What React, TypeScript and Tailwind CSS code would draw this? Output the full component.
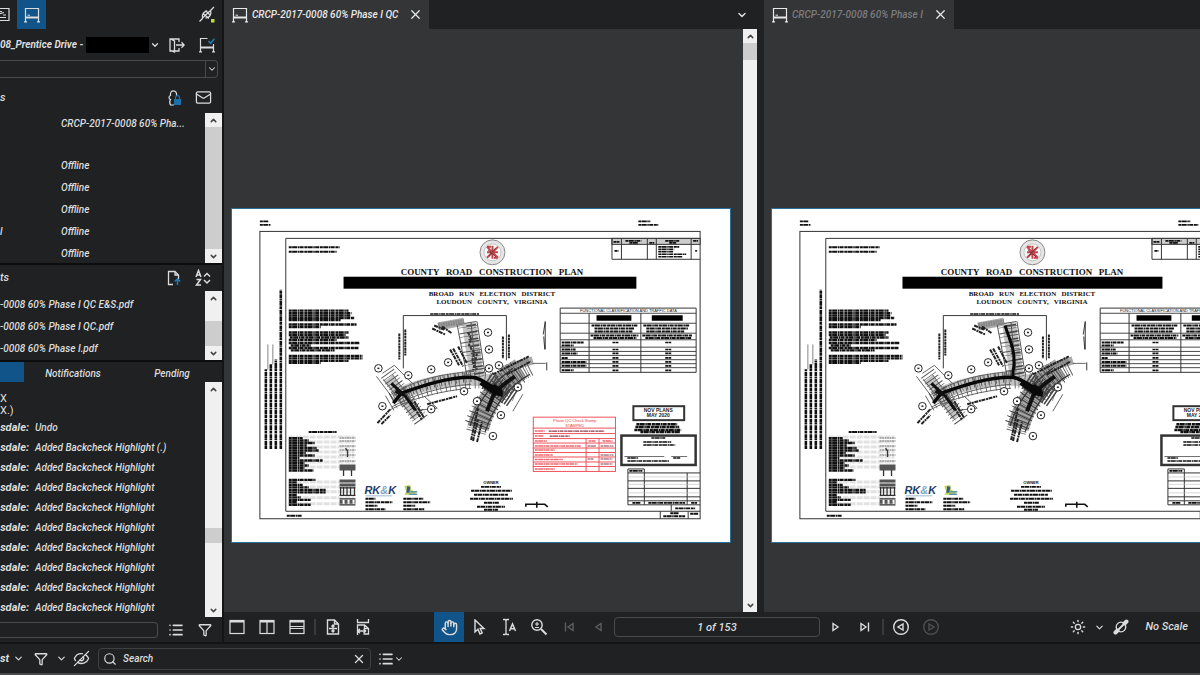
import React from "react";
import {
  ChevronDown,
  ChevronUp,
  EyeOff,
  Funnel,
  Hand,
  List,
  Mail,
  Search,
  Sun,
  X,
} from "lucide-react";

type IconProps = { className?: string };

const SheetIcon = ({ className }: IconProps) => (
  <svg className={className} width="16" height="16" viewBox="0 0 16 16" fill="none" stroke="currentColor">
    <path d="M1.5 15V1.5h13V15M0 14.8h3M13 14.8h3" strokeWidth="1.2" />
    <path d="M1.5 10.5h13" strokeWidth="2" />
    <path d="M3.5 8.2h2.5" strokeWidth="1" />
  </svg>
);

const MarkupIcon = () => (
  <svg width="16" height="16" viewBox="0 0 16 16" fill="none" stroke="currentColor" strokeWidth="1.2">
    <path d="M0 1.5h15v12H0M3 4.5h5M3 7.5l7-2M4 10.5h8M9 8h3" />
  </svg>
);

const PlugIcon = () => (
  <svg width="18" height="18" viewBox="0 0 18 18" fill="none" stroke="currentColor" strokeWidth="1.3">
    <path d="M1.5 15.5l3.500-3.500M12.500 4.500l3.500-3.500M5 11.500l7.500-7" />
    <path d="M4.500 12C3.500 8.500 6 5 9.500 5.500M12.500 4.500c1.500 3.500-1 7.500-5 7.500M5 7.500l6 5M7.500 4.500l5 5" />
    <rect x="13" y="13" width="3.500" height="3.500" fill="#c8d83c" stroke="none" />
  </svg>
);

const ExitIcon = () => (
  <svg width="16" height="16" viewBox="0 0 16 16" fill="none" stroke="currentColor" strokeWidth="1.300">
    <path d="M10 5V2H1v12h9v-3M1.500 2l4 2v11l-4-1.500M7 8h8M12.500 5.300L15.200 8l-2.700 2.700" />
  </svg>
);

const SheetCheckIcon = () => (
  <svg width="16" height="16" viewBox="0 0 16 16" fill="none" stroke="currentColor">
    <path d="M8.500 1.500h-7V15M14.500 7v8M0 14.800h3M13 14.800h3" strokeWidth="1.200" />
    <path d="M1.500 10.500h13" strokeWidth="2" />
    <path d="M9.500 4l2 2.200 4-4.500" stroke="#1b7fb8" strokeWidth="1.600" />
  </svg>
);

const PersonLockIcon = () => (
  <svg width="16" height="16" viewBox="0 0 16 16" fill="none" stroke="currentColor" strokeWidth="1.200">
    <path d="M7 15H3.500c-1-2-1-4 0-5.500C1.500 9 1.500 6 3.500 5.500 3 2.500 4.500.8 6.500.8s3.500 2 3 5" />
    <path d="M8.500 9V7.500c0-2.500 4-2.500 4 0V9" stroke="#1f6fa8" />
    <rect x="7" y="9" width="7" height="6" fill="#1f6fa8" stroke="none" />
  </svg>
);

const AddFileIcon = () => (
  <svg width="16" height="16" viewBox="0 0 16 16" fill="none" stroke="currentColor" strokeWidth="1.300">
    <path d="M7 14.500H2.500v-13H9l3.500 3.500v4M9 1.500V5h3.500" />
    <path d="M11.500 15V9M8.800 11.500l2.700-2.700 2.700 2.700" stroke="#1f7fbf" strokeWidth="1.500" />
  </svg>
);

const SortIcon = () => (
  <svg width="18" height="18" viewBox="0 0 18 18" fill="none" stroke="currentColor" strokeWidth="1.500">
    <path d="M2 8l2.500-6.500L7 8M2.800 6h3.500M2.500 10.500h4L2.500 16H7" />
    <path d="M10 7.500l3-3 3 3M10 11l3 3 3-3" />
  </svg>
);

const EnvelopeIcon = () => <Mail size={17} strokeWidth={1.8} />;

const LayoutIcon = ({ kind }: { kind: "single" | "columns" | "rows" }) => (
  <svg width="16" height="16" viewBox="0 0 16 16" fill="none" stroke="currentColor" strokeWidth="1.200">
    <rect x="1" y="1.500" width="14" height="13" />
    <path d="M1 2.500h14" strokeWidth="2" />
    {kind === "columns" && <path d="M8 2v12.500" />}
    {kind === "rows" && <path d="M1 7.500h14M1 9.500h14" />}
  </svg>
);

const FitPageIcon = () => (
  <svg width="16" height="16" viewBox="0 0 16 16" fill="none" stroke="currentColor" strokeWidth="1.400">
    <path d="M2.500 1h7l4 4v10h-11zM9.500 1v4h4" />
    <path d="M8 5.500v8M4 9.500h8M6.500 7.500L8 6l1.500 1.500M6.500 11.500L8 13l1.500-1.500" />
  </svg>
);

const FitWidthIcon = () => (
  <svg width="16" height="16" viewBox="0 0 16 16" fill="none" stroke="currentColor" strokeWidth="1.300">
    <path d="M2.500 0v3.500h11V0M2.500 16V6h7l4 3.500V15h-5M2.500 12h8M5 9.800L2.800 12 5 14.200M8.500 9.800l2.200 2.200-2.200 2.200M9.500 6v3.500h4" />
  </svg>
);

const PointerIcon = () => (
  <svg width="16" height="16" viewBox="0 0 16 16" fill="none" stroke="currentColor" strokeWidth="1.400">
    <path d="M4 1v12l3-2.800L9 15l2.200-1-2-4.500H13z" />
  </svg>
);

const TextSelectIcon = () => (
  <svg width="16" height="18" viewBox="0 0 16 18" fill="none" stroke="currentColor" strokeWidth="1.300">
    <path d="M2 1.500h2l1 1 1-1h2M5 2v14M2 16.500h2l1-1 1 1h2" />
    <path d="M8.500 13L11.500 6l3 7M9.500 10.800h4" strokeWidth="1.500" />
  </svg>
);

const ZoomIcon = () => (
  <svg width="18" height="18" viewBox="0 0 18 18" fill="none" stroke="currentColor">
    <circle cx="7" cy="7" r="5.200" strokeWidth="1.400" />
    <path d="M11 11l5.500 5.500" strokeWidth="2" />
    <path d="M7 4v4M5 6h4M5 9.500h4" strokeWidth="1.100" />
  </svg>
);

const StepIcon = ({ flip, bar }: { flip?: boolean; bar?: boolean }) => (
  <svg className={flip ? "-scale-x-100" : ""} width="12" height="12" viewBox="0 0 12 12" fill="none" stroke="currentColor" strokeWidth="1.400">
    <path d={bar ? "M2 2.500v7L7 6zM9.500 1.500v9" : "M4 2.500v7L9 6z"} />
  </svg>
);

const CircleStepIcon = ({ flip }: { flip?: boolean }) => (
  <svg className={flip ? "-scale-x-100" : ""} width="18" height="18" viewBox="0 0 18 18" fill="none" stroke="currentColor" strokeWidth="1.400">
    <circle cx="9" cy="9" r="7.300" />
    <path d="M7 6v6l5-3z" />
  </svg>
);

const LineWeightIcon = () => (
  <svg width="16" height="16" viewBox="0 0 16 16" fill="none" stroke="currentColor">
    <circle cx="8" cy="8" r="4.800" strokeWidth="1.300" />
    <path d="M2 14L14 2" strokeWidth="1.800" />
    <path d="M2.500 13.500l2-2M11.500 4.500l2-2" strokeWidth="4" strokeLinecap="round" />
  </svg>
);

const IconButton = ({
  label,
  className = "",
  children,
}: {
  label: string;
  className?: string;
  children: React.ReactNode;
}) => (
  <button type="button" aria-label={label} className={`flex shrink-0 items-center justify-center ${className}`}>
    {children}
  </button>
);

const ScrollBar = ({ width, before, thumb }: { width: string; before: number; thumb: number }) => (
  <div className={`flex shrink-0 flex-col bg-[#f0f0f0] text-[#444] ${width}`}>
    <div className="flex h-[14px] items-center justify-center">
      <ChevronUp size={9} strokeWidth={4} />
    </div>
    <div className="min-h-0 flex-1">
      <div style={{ height: `${before}%` }} />
      <div className="bg-[#cdcdcd]" style={{ height: `${thumb}%` }} />
    </div>
    <div className="flex h-[14px] items-center justify-center">
      <ChevronDown size={9} strokeWidth={4} />
    </div>
  </div>
);

// [x, y, width] of each line of fine print on the sheet
type Row = [number, number, number];

const FinePrint = ({ rows, weight = 2.1, color = "#111" }: { rows: Row[]; weight?: number; color?: string }) => (
  <g stroke={color} strokeWidth={weight} strokeDasharray="3 .4 5 .6 1.500 .4 4 .7">
    {rows.map(([x, y, w], i) => (
      <path key={i} d={`M${x} ${y}h${w}`} />
    ))}
  </g>
);

const notes: Row[] = [
  [57, 102, 60], [57, 104.5, 63], [57, 107, 62], [57, 109.5, 66], [57, 111.5, 52],
  [57, 116, 68], [57, 118.500, 32],
  [57, 124, 60], [57, 126.500, 57], [58, 129, 59], [57, 131.500, 48], [57, 134.500, 71], [59, 137, 20],
  [57, 139.500, 70], [59, 142, 44],
  [57, 147.500, 74], [57, 150, 74], [57, 152.500, 60], [57, 154.500, 32],
];

const legendRows = [230, 232.5, 235, 237.500, 240, 242.500, 245, 247.500, 250, 252.500, 255, 257.500, 260, 262.500];
const legendWidths = [14, 20, 26, 18, 28, 30, 17, 26, 11, 34, 16, 20, 16, 25];
const utilityRows = [272, 274.500, 277, 279.500, 282, 284.500, 287, 289.500, 292, 294.500, 297];
const utilityWidths = [27, 8, 14, 20, 37, 37, 8, 12, 22, 8, 22];
const trafficRows = [104.7, 114.700, 124.700, 131.300, 138.700, 143, 147, 151.300, 155.300, 159.300];

const bubbles: [number, number][] = [
  [147, 160], [200, 161], [217, 154], [257, 124], [258, 141], [258, 160], [268, 157],
  [151, 198], [177, 167], [200, 201], [233, 183], [246, 193], [287, 179], [270, 207], [262, 228],
];

const ReviewStamp = () => (
  <g stroke="#f0525a" fill="none" strokeWidth="1">
    <rect x="302.500" y="209" width="82.500" height="54.500" fill="#fff" />
    <path d="M302 220h83M302 225.500h83M302 230.500h83M302 235h83M302 240h83M302 244.500h83M302 249h83M302 254h83M302 258.500h83M355.500 230.500v33M368.500 230.500v33" />
    <g stroke="none" fill="#e8404a" fontSize="4" textAnchor="middle" className="font-['Liberation_Sans']">
      <text x="344" y="214">Phase QC Check Stamp</text>
      <text x="344" y="218.500">STAMPED</text>
    </g>
    <FinePrint color="#8b3b48" weight={1.2} rows={[[318, 223, 56], [319, 228, 20]]} />
    <FinePrint color="#ee6870" weight={1.5} rows={[[304, 223, 10], [304, 228, 9], [304, 233, 12], [304, 238, 46], [304, 242, 20], [304, 247, 18], [304, 251.500, 28], [304, 256, 43], [304, 261, 20], [358, 233, 7], [372, 233, 10]]} />
    <FinePrint color="#aa8088" weight={1.500} rows={[[357, 238, 9], [370, 238, 13], [357, 251, 6], [370, 247, 13], [370, 251, 12], [370, 256, 12]]} />
  </g>
);

const RoadMap = ({ built }: { built: boolean }) => (
  <g fill="none" stroke="#222">
    <path d="M172 160v-53h103.500v45" strokeWidth=".9" />
    <FinePrint weight={1.600} rows={[[199, 105.500, 49]]} />
    <path d="M168 125v26M174 121v26M272 128v22M278 126v24" strokeWidth="2" strokeDasharray="3 .6 2 .5" />

    {/* shaded survey ground */}
    <g stroke="#c4c4c4">
      <path d="M162 189C185 177 212 171 240 171s26 8 34 12" strokeWidth="13" />
      <path d="M157 170l29 38" strokeWidth="11" />
      <path d="M238 115l8 55" strokeWidth="14" />
      <path d="M290 160c-24 16-36 34-43 60" strokeWidth="22" stroke="#a8a8a8" />
      <path d="M207 118l26-5M276 160l26-8" strokeWidth="8" stroke="#aaa" />
    </g>

    {/* parcels either side of the roads */}
    <g stroke="#555">
      <path d="M158 195C180 182 212 174 240 172s30 8 48 14" strokeWidth="17" strokeDasharray=".8 3.500 .6 5" />
      <path d="M160 190C182 178 212 170 242 168" strokeWidth="11" strokeDasharray="1 2 .5 4" />
      <path d="M158 202C180 190 212 182 240 180M160 186C185 171 212 165 243 163M160 199C182 186 212 178 240 176" strokeWidth=".9" />
      <path d="M156 165l34 47" strokeWidth="16" strokeDasharray="1 2.500 .6 3" />
      <path d="M161 166l30 41M152 171l32 41" strokeWidth=".9" />
      <path d="M236 114l9 54" strokeWidth="19" strokeDasharray="1 3 .5 5" />
      <path d="M240 116l9 54" strokeWidth="10" strokeDasharray="1.500 2 .5 3" stroke="#444" />
      <path d="M226 116l10 52M246 113l8 52M240 114l5 50" strokeWidth="1" />
      <path d="M298 158c-28 14-44 34-53 66" strokeWidth="20" strokeDasharray="1 2 .6 1.500" stroke="#666" />
      <path d="M287 164c-19 14-34 30-42 56" strokeWidth="25" strokeDasharray=".8 4" stroke="#333" />
      <path d="M282 160c-20 14-36 34-43 58M299 166c-24 14-36 32-45 58" strokeWidth="1.200" stroke="#333" />
      <path d="M256 172l26 18" strokeWidth="20" strokeDasharray="1.500 1.500" stroke="#444" />
      <path d="M207 117l26-4M272 160l26-9" strokeWidth="5" strokeDasharray="2 .5" stroke="#888" />
    </g>
    <path d="M201 120l13 6M203 117l10 4M211 118l10 7M222 140l10 18M227 138l9 17M219 141l9 16M262 166l36-18M276 166l24-13M240 232l7-32M246 234l5-20M242 233l5-22M146 215l13-14M150 216l9-9M179 193l12 19M183 193l10 17M196 196l30-8" strokeWidth="2" strokeDasharray="4 .8 2 .6" />
    <path d="M151 165l12-8 18 18M193 188l13 12-18 2M302 155h13M262 227l-4 1M145 168l18 24M282 203l10-17" strokeWidth=".7" />

    {/* carriageways */}
    <path d="M162 195l8-10C190 178 215 169 240 169c12 0 18 10 30 14" stroke="#080808" strokeWidth="3.500" />
    <path d="M160 175l14 13 10 14M164 183l11 5" stroke="#111" strokeWidth="3" />
    <path d="M284 168c-8 6-17 11-22 20l-6 15" stroke="#111" strokeWidth="4" />
    <path d="M250 174l14 10 8 2M262 178l8 6" stroke="#0a0a0a" strokeWidth="5.500" />
    {built && <path d="M234 117c4 13 10 24 9 38 0 5-2 9-1 14" stroke="#080808" strokeWidth="3" />}
    {!built && <path d="M237 124l3 6-2 7 5 7-2 9 5 8M246 145l-4 17" stroke="#333" strokeWidth="2" strokeDasharray="3 1" />}

    <g fill="#fff" stroke="#222" strokeWidth="1">
      {bubbles.map(([x, y]) => (
        <circle key={`${x}-${y}`} cx={x} cy={y} r="3.800" />
      ))}
    </g>
    <g strokeWidth="1.500">
      {bubbles.map(([x, y]) => (
        <path key={`${x}-${y}`} d={`M${x - 1} ${y}h2`} />
      ))}
    </g>
    <path d="M314.500 113v28M312.500 126l2-13M313 128l1 13M316 154v8" strokeWidth=".9" />
  </g>
);

const PlanSheet = ({ barX, barWidth, stamped }: { barX: number; barWidth: number; stamped?: boolean }) => (
  <svg
    role="img"
    aria-label="County road construction plan"
    className="block w-[500px] shrink-0 border border-[#2a6f99] bg-white not-italic"
    viewBox="0 0 500 334"
    fill="none"
    stroke="#333"
  >
    <FinePrint weight={1.8} rows={[[28, 12.500, 9], [28, 16, 11], [408, 12.500, 12], [408, 16, 20]]} />
    <rect x="28" y="22.500" width="442" height="288.500" strokeWidth="1" />
    <path d="M470 29.500H54v274h416" strokeWidth="1" />
    <FinePrint rows={[[57, 38.500, 51], [57, 43, 48], [55, 308, 15]]} weight={2} />

    {/* seal */}
    <circle cx="261.500" cy="43.500" r="12.500" fill="#e6e6e6" stroke="#888" />
    <circle cx="261.500" cy="43.500" r="8.500" fill="#f6f6f6" stroke="#aaa" strokeWidth=".6" />
    <path d="M256 38l11 11M267 38l-11 11M261.500 37v13M256 43.500h11M256 38h4M263 49h4" stroke="#c4444c" strokeWidth="2" />
    <path d="M257 41l8 7M265 39l-7 8" stroke="#5b3a3e" strokeWidth=".8" />

    <g className="font-['Liberation_Serif'] font-bold" fill="#111" stroke="none" textAnchor="middle">
      <text x="261" y="66" fontSize="9" className="whitespace-pre">COUNTY   ROAD   CONSTRUCTION   PLAN</text>
      <text x="261" y="87" fontSize="7" className="whitespace-pre">BROAD   RUN   ELECTION   DISTRICT</text>
      <text x="261" y="95" fontSize="7" className="whitespace-pre">LOUDOUN   COUNTY,   VIRGINIA</text>
    </g>
    <rect x={barX} y="68" width={barWidth} height="12" fill="#000" stroke="none" />

    {/* sheet reference block */}
    <rect x="381.500" y="29.500" width="88.500" height="6" fill="#ccc" />
    <path d="M381.500 29.500v21H470M391 29.500v21M417 29.500v21M426 29.500v21M461 29.500v21" />
    <FinePrint weight={1.600} rows={[[383, 33, 6], [395, 32, 16], [399, 34, 9], [419, 34, 5], [435, 32, 14], [439, 34, 7], [463, 32, 5], [384, 42, 4], [428, 38, 21], [428, 40.500, 16], [428, 43, 15], [428, 45.500, 28], [428, 48, 24], [465, 42, 2]]} />

    <FinePrint rows={notes} weight={2.400} />
    <g transform="translate(34 241) rotate(-90)">
      <FinePrint weight={2.600} rows={[[0, 0, 80], [0, 5, 85], [0, 10, 90], [0, 15, 160]]} />
      <path d="M80 2h25M85 7h20" strokeWidth=".6" />
    </g>

    {/* traffic data table */}
    <path d="M329.500 99.500H466v64.500H329.500zM358.500 104.700V164M410.500 104.700V164" />
    {trafficRows.map((y) => (
      <path key={y} d={`M329.500 ${y}H466`} strokeWidth=".9" />
    ))}
    <text x="398" y="103.500" fontSize="4" fill="#222" stroke="none" textAnchor="middle" className="font-['Liberation_Sans']">
      FUNCTIONAL CLASSIFICATION AND TRAFFIC DATA
    </text>
    <path d="M366 109.500h35M421.500 109.500h31" stroke="#000" strokeWidth="5.500" />
    <FinePrint weight={2.100} rows={[[361, 117, 46], [364, 120, 40], [364, 123, 38], [413, 117, 46], [416, 120, 42], [416, 123, 38], [360, 127, 48], [363, 129.500, 43], [412, 127, 50], [415, 129.500, 46]]} />
    <FinePrint weight={2} rows={[[331, 134, 22], [331, 137, 12], [331, 141, 14], [331, 145, 16], [331, 149.500, 6], [331, 153.500, 25], [331, 157.500, 25], [331, 162, 12]]} />
    {[134, 141, 145, 149.500, 153.500, 157.500, 162].map((y) => (
      <FinePrint key={y} weight={1.600} rows={[[382, y, 6], [435, y, 6]]} />
    ))}

    <RoadMap built={!stamped} />

    {/* legend */}
    <FinePrint weight={2} rows={[[77, 224, 28]]} />
    <path d="M57 229h66M57 234h66M57 239h66M57 244h66M57 249h66M57 254h66M57 259h66M57 274h66M57 279h66M57 284h66M57 290h66M57 296h66" stroke="#e2e2e2" strokeWidth="3" strokeDasharray="6 1" />
    <FinePrint weight={2.400} rows={legendRows.map((y, i): Row => [57, y, legendWidths[i]])} />
    <FinePrint weight={2.400} rows={utilityRows.map((y, i): Row => [57, y, utilityWidths[i]])} />
    <path d="M108 230h16M108 233h16M108 238h16M108 242h16M108 247h16M108 253h16" stroke="#999" strokeWidth="1.500" strokeDasharray="2 .5" />
    <path d="M108 258h16M108 261h16M108 273h16M108 277h16" stroke="#555" strokeWidth="3" />
    <path d="M114 240l2 3v6M112 262v6M120 262v6" strokeWidth="1.300" />
    <path d="M108 280h16M108 287.500h16M109 279v9M112 279v9M115.500 279v9M119 279v9M123 279v9M108 291h16M108 297h16" strokeWidth="1.300" />
    <path d="M108 294h16" strokeWidth="4" strokeDasharray="3 2" stroke="#555" />

    {/* consultants */}
    <text x="133" y="286.500" fontSize="11" fill="#1d3c68" stroke="none" className="font-['Liberation_Sans'] font-bold italic">
      RK<tspan fill="#84a7c4">&amp;</tspan>K
    </text>
    <path d="M134 288h27" stroke="#9ab7cf" strokeWidth="1" />
    <path d="M173 278l6-1 1 5 5 3-3 2h-9l2-3z" fill="#c4d05a" stroke="none" />
    <path d="M176 278l3 1-1 6h-3z" fill="#2d5d96" stroke="none" />
    <path d="M179 284h7M178 286.500h8" stroke="#5e94a8" strokeWidth="1.500" />
    <FinePrint weight={2} rows={[[134, 291, 10], [134, 294.500, 27], [134, 298, 12], [134, 301.500, 20], [172, 291, 20], [172, 294.500, 27], [172, 298, 12], [172, 301.500, 21]]} />
    <text x="260" y="276" fontSize="4" fill="#111" stroke="none" textAnchor="middle" className="font-['Liberation_Sans'] font-bold">OWNER</text>
    <FinePrint weight={2} rows={[[250, 279, 20], [240, 283, 41], [243, 287, 34], [239, 291, 43], [253, 295, 15], [246, 299, 28], [253, 302, 14]]} />
    <path d="M295 299v-2.500h11V294v6M306 296.500h8l3 2.500" stroke="#111" strokeWidth="1.600" />

    {stamped && <ReviewStamp />}

    {/* title block */}
    <rect x="403" y="198" width="51" height="14" strokeWidth="2" />
    <g fontSize="5" fill="#222" stroke="none" textAnchor="middle" className="font-['Liberation_Sans'] font-bold">
      <text x="428" y="204">NOV PLANS</text>
      <text x="428" y="209">MAY 2020</text>
    </g>
    <FinePrint weight={2.500} rows={[[406, 216, 41], [405, 219, 44], [404, 222, 47], [410, 224, 40]]} />
    <rect x="391" y="227.500" width="74.500" height="29.500" strokeWidth="2.500" />
    <FinePrint weight={1.600} rows={[[421, 230, 14], [413, 234, 28], [413, 237, 32], [397, 250, 11], [443, 250, 7], [397, 253, 42]]} />
    <path d="M394 248.500h40M441 248.500h16" strokeWidth=".7" />
    <path d="M397.500 261H414v4h56M397.500 261v36H470M397.500 265H414M397.500 273H470M397.500 280.500H470M397.500 289H470M397.500 293H470M414 265v32M457 265v32M441 303v-6M430 303.500v7.500M458 303.500v7.500" strokeWidth="1" />
    <FinePrint weight={1.800} rows={[[399, 263, 13], [402, 295, 8], [418, 295, 37], [461, 295, 6], [445, 300.500, 20], [440, 305.500, 9], [433, 308.500, 22], [460, 306, 8]]} />
    <path d="M397.500 269H470M397.500 276.500H470M397.500 285H470" stroke="#bbb" strokeWidth=".6" />
  </svg>
);

const attendees = ["", "", "", "l", ""];
const documents = [
  "-0008 60% Phase I QC E&S.pdf",
  "-0008 60% Phase I QC.pdf",
  "-0008 60% Phase I.pdf",
];
const records = ["Undo", "Added Backcheck Highlight (.)", ...Array(8).fill("Added Backcheck Highlight")];

const SidePanel = () => (
  <aside className="flex w-[224px] shrink-0 flex-col border-r-2 border-[#141517]">
    <div className="flex h-[29px] items-center">
      <IconButton label="Markups" className="-ml-1.5 w-4">
        <MarkupIcon />
      </IconButton>
      <IconButton label="Studio" className="ml-[7px] h-full w-[29px] bg-[#10548a]">
        <SheetIcon />
      </IconButton>
      <IconButton label="Connection" className="mr-1.5 ml-auto">
        <PlugIcon />
      </IconButton>
    </div>

    <div className="flex h-[31px] items-center">
      <span className="w-[86px] shrink-0 font-bold whitespace-nowrap">08_Prentice Drive -</span>
      <span className="h-4 w-[63px] shrink-0 bg-black" />
      <IconButton label="Choose session" className="w-3">
        <ChevronDown size={10} strokeWidth={3} />
      </IconButton>
      <IconButton label="Leave session" className="ml-auto w-[30px]">
        <ExitIcon />
      </IconButton>
      <IconButton label="Finish session" className="w-[30px]">
        <SheetCheckIcon />
      </IconButton>
    </div>

    <div className="relative mr-1 h-[18px] rounded-r-sm border border-l-0 border-[#4a4b4d]">
      <select aria-label="Status" className="h-full w-full appearance-none bg-transparent outline-none" />
      <span className="pointer-events-none absolute inset-y-0 right-0 flex w-3 items-center justify-center border-l border-[#4a4b4d]">
        <ChevronDown size={10} strokeWidth={2.5} />
      </span>
    </div>

    <div className="flex h-[35px] items-center pt-1">
      <h2 className="text-[11px]">s</h2>
      <IconButton label="Permissions" className="mr-3 ml-auto">
        <PersonLockIcon />
      </IconButton>
      <IconButton label="Invite" className="mr-2.5">
        <EnvelopeIcon />
      </IconButton>
    </div>

    <div className="flex h-[150px] overflow-hidden">
      <div className="min-w-0 flex-1">
        <table className="w-full border-collapse">
          <tbody>
            <tr className="h-[21px]">
              <td className="w-[61px] p-0" />
              <td className="p-0 whitespace-nowrap">CRCP-2017-0008 60% Pha...</td>
            </tr>
            <tr className="h-[21px]">
              <td colSpan={2} className="p-0" />
            </tr>
            {attendees.map((name, i) => (
              <tr key={i} className="h-[22px]">
                <td className="p-0">{name}</td>
                <td className="p-0">Offline</td>
              </tr>
            ))}
          </tbody>
        </table>
      </div>
      <ScrollBar width="w-[17px]" before={0} thumb={100} />
    </div>

    <div className="flex h-7 items-center border-t-2 border-[#0c0d0e]">
      <h2 className="text-[11px]">ts</h2>
      <IconButton label="Add document" className="mr-3 ml-auto">
        <AddFileIcon />
      </IconButton>
      <IconButton label="Sort" className="mr-2.5">
        <SortIcon />
      </IconButton>
    </div>

    <div className="flex h-[69px] overflow-hidden">
      <ul className="min-w-0 flex-1 pt-[3px]">
        {documents.map((name) => (
          <li key={name} className="flex h-[22px] items-center whitespace-nowrap">
            {name}
          </li>
        ))}
      </ul>
      <ScrollBar width="w-[17px]" before={38} thumb={62} />
    </div>

    <div className="flex h-[22px] shrink-0 items-stretch border-t-2 border-[#0c0d0e]">
      <button type="button" aria-label="Record" className="w-6 bg-[#10548a]" />
      <button type="button" className="w-[98px] pt-1 italic">Notifications</button>
      <button type="button" className="flex-1 pt-1 italic">Pending</button>
    </div>

    <div className="flex min-h-0 flex-1 overflow-hidden">
      <div className="min-w-0 flex-1 pt-[11px]">
        <p className="text-[11px] leading-3 font-normal not-italic">X</p>
        <p className="text-[11px] leading-3 font-normal not-italic">X.)</p>
        <ul className="pt-px">
          {records.map((text, i) => (
            <li key={i} className="flex h-5 items-center whitespace-nowrap">
              <b className="w-[29px] shrink-0 text-right text-[11px]">sdale:</b>
              <span className="ml-1.5">{text}</span>
            </li>
          ))}
        </ul>
      </div>
      <ScrollBar width="w-[17px]" before={64} thumb={7} />
    </div>

    <div className="flex h-[25px] shrink-0 items-center">
      <input
        type="text"
        aria-label="Message"
        className="h-4 w-[158px] rounded-r-sm border border-l-0 border-[#4a4b4d] outline-none"
      />
      <IconButton label="Record options" className="ml-2.5">
        <List size={16} strokeWidth={2.5} />
      </IconButton>
      <IconButton label="Filter records" className="mr-2.5 ml-auto">
        <Funnel size={14} strokeWidth={2.2} />
      </IconButton>
    </div>
  </aside>
);

const DocumentTab = ({ title, muted }: { title: string; muted?: boolean }) => (
  <div className="flex items-center bg-[#343537] px-1.5 pl-2 text-[#e8e8e8]">
    <SheetIcon className="shrink-0" />
    <span className={`ml-1 whitespace-nowrap ${muted ? "text-[#7b7c7e]" : ""}`}>{title}</span>
    <IconButton label={`Close ${title}`} className="ml-2.5">
      <X size={15} strokeWidth={2} />
    </IconButton>
  </div>
);

const Divider = () => <span className="mx-[2px] h-4 w-[2px] bg-[#3a3b3d]" />;

const Toolbar = () => (
  <div className="flex h-[30px] shrink-0 items-stretch text-[11px]">
    <IconButton label="Single view" className="-ml-0.5 w-[30px]"><LayoutIcon kind="single" /></IconButton>
    <IconButton label="Split vertical" className="w-[30px]"><LayoutIcon kind="columns" /></IconButton>
    <IconButton label="Split horizontal" className="w-[30px]"><LayoutIcon kind="rows" /></IconButton>
    <div className="flex items-center"><Divider /></div>
    <IconButton label="Fit page" className="w-[30px]"><FitPageIcon /></IconButton>
    <IconButton label="Fit width" className="w-[30px]"><FitWidthIcon /></IconButton>

    <IconButton label="Pan" className="ml-14 w-[30px] bg-[#10548a]"><Hand size={17} strokeWidth={2} /></IconButton>
    <IconButton label="Select" className="w-[30px]"><PointerIcon /></IconButton>
    <IconButton label="Select text" className="w-[30px]"><TextSelectIcon /></IconButton>
    <IconButton label="Zoom" className="w-[30px]"><ZoomIcon /></IconButton>
    <IconButton label="First page" className="w-[30px] text-[#5d5e60]"><StepIcon flip bar /></IconButton>
    <IconButton label="Previous page" className="w-[30px] text-[#5d5e60]"><StepIcon flip /></IconButton>
    <input
      type="text"
      aria-label="Page"
      defaultValue="1 of 153"
      className="h-5 w-[206px] self-center rounded-sm border border-[#4a4b4d] text-center italic outline-none"
    />
    <IconButton label="Next page" className="w-[30px]"><StepIcon /></IconButton>
    <IconButton label="Last page" className="w-[30px]"><StepIcon bar /></IconButton>
    <div className="flex items-center"><Divider /></div>
    <IconButton label="Previous view" className="w-[30px]"><CircleStepIcon flip /></IconButton>
    <IconButton label="Next view" className="w-[30px] text-[#4e4f51]"><CircleStepIcon /></IconButton>

    <div className="mr-3 ml-auto flex items-center">
      <IconButton label="Dim"><Sun size={16} strokeWidth={2} /></IconButton>
      <IconButton label="Dim options" className="ml-2"><ChevronDown size={11} strokeWidth={2.5} /></IconButton>
      <IconButton label="Line weights" className="ml-2"><LineWeightIcon /></IconButton>
      <span className="ml-4 whitespace-nowrap">No Scale</span>
    </div>
  </div>
);

const FilterBar = () => (
  <footer className="flex h-[33px] shrink-0 items-center border-t-2 border-b-2 border-t-[#141517] border-b-[#48494b]">
    <button type="button" className="flex items-center text-[11px] font-bold italic">
      st
      <ChevronDown className="ml-1" size={11} strokeWidth={2.5} />
    </button>
    <IconButton label="Filter" className="ml-2.5"><Funnel size={14} strokeWidth={2.2} /></IconButton>
    <IconButton label="Filter options" className="ml-2"><ChevronDown size={11} strokeWidth={2.5} /></IconButton>
    <IconButton label="Hide markups" className="ml-1.5"><EyeOff className="-scale-x-100" size={17} strokeWidth={1.8} /></IconButton>
    <label className="ml-2 flex h-[22px] w-[273px] items-center rounded-sm border border-[#3f4042] px-1">
      <Search size={14} strokeWidth={2} />
      <input
        type="text"
        aria-label="Search"
        placeholder="Search"
        className="ml-1.5 min-w-0 flex-1 italic outline-none placeholder:text-[#dcdcdc]"
      />
      <button type="button" aria-label="Clear search">
        <X size={14} strokeWidth={2.2} />
      </button>
    </label>
    <IconButton label="List options" className="ml-[7px]">
      <List size={16} strokeWidth={2.5} />
      <ChevronDown size={10} strokeWidth={2.5} />
    </IconButton>
  </footer>
);

const App = () => {
  return (
    <div className="flex h-screen flex-col overflow-hidden bg-[#1f2123] font-['Roboto','Liberation_Sans',sans-serif] text-[10px] leading-4 font-medium text-[#dcdcdc] italic">
      <div className="flex min-h-0 flex-1">
        <SidePanel />
        <main className="flex min-w-0 flex-1 flex-col">
          <div className="flex min-h-0 flex-1">
            <section className="flex w-[540px] shrink-0 flex-col">
              <div className="flex h-[29px] shrink-0">
                <DocumentTab title="CRCP-2017-0008 60% Phase I QC" />
                <IconButton label="Open documents" className="mr-4 ml-auto">
                  <ChevronDown size={12} strokeWidth={3} />
                </IconButton>
              </div>
              <div className="flex min-h-0 flex-1">
                <div className="min-w-0 flex-1 overflow-hidden bg-[#343537] pt-[179px] pl-[7px]">
                  <PlanSheet barX={112} barWidth={294} stamped />
                </div>
                <ScrollBar width="w-[14px]" before={0} thumb={3} />
                <div className="w-[7px]" />
              </div>
            </section>
            <section className="flex min-w-0 flex-1 flex-col">
              <div className="flex h-[29px] shrink-0">
                <DocumentTab title="CRCP-2017-0008 60% Phase I" muted />
              </div>
              <div className="min-h-0 flex-1 overflow-hidden bg-[#343537] pt-[179px] pl-[7px]">
                <PlanSheet barX={131} barWidth={261} />
              </div>
            </section>
          </div>
          <Toolbar />
        </main>
      </div>
      <FilterBar />
    </div>
  );
};

export default App;
